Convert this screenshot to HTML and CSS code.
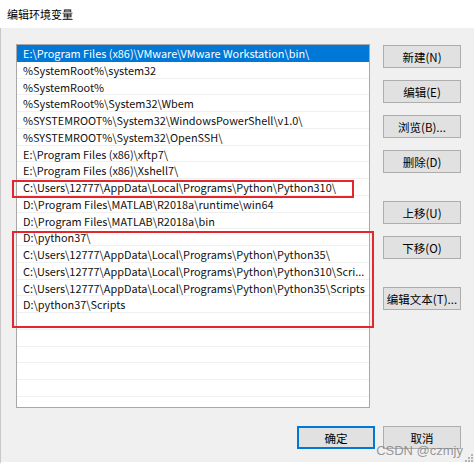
FILE: index.html
```html
<!DOCTYPE html>
<html lang="zh-CN">
<head>
<meta charset="utf-8">
<link rel="stylesheet" href="styles.css">
</head>
<body>
  <div class="dialog">
    <div class="titlebar">编辑环境变量</div>
    <div class="frame">
      <div class="content">
        <div class="list-wrap">
          <ul class="path-list">
            <li class="selected">E:\Program Files (x86)\VMware\VMware Workstation\bin\</li>
            <li>%SystemRoot%\system32</li>
            <li>%SystemRoot%</li>
            <li>%SystemRoot%\System32\Wbem</li>
            <li>%SYSTEMROOT%\System32\WindowsPowerShell\v1.0\</li>
            <li>%SYSTEMROOT%\System32\OpenSSH\</li>
            <li>E:\Program Files (x86)\xftp7\</li>
            <li>E:\Program Files (x86)\Xshell7\</li>
            <li>C:\Users\12777\AppData\Local\Programs\Python\Python310\</li>
            <li>D:\Program Files\MATLAB\R2018a\runtime\win64</li>
            <li>D:\Program Files\MATLAB\R2018a\bin</li>
            <li>D:\python37\</li>
            <li>C:\Users\12777\AppData\Local\Programs\Python\Python35\</li>
            <li>C:\Users\12777\AppData\Local\Programs\Python\Python310\Scri...</li>
            <li>C:\Users\12777\AppData\Local\Programs\Python\Python35\Scripts</li>
            <li>D:\python37\Scripts</li>
            <li></li>
            <li></li>
            <li></li>
            <li></li>
            <li></li>
            <li></li>
          </ul>
          <!-- red outlines drawn over the list -->
          <div class="mark mark-single"></div>
          <div class="mark mark-group"></div>
        </div>
        <div class="side-buttons">
          <button class="btn">新建(N)</button>
          <button class="btn">编辑(E)</button>
          <button class="btn">浏览(B)...</button>
          <button class="btn">删除(D)</button>
          <button class="btn spaced">上移(U)</button>
          <button class="btn">下移(O)</button>
          <button class="btn spaced">编辑文本(T)...</button>
        </div>
      </div>
      <div class="footer">
        <button class="btn default">确定</button>
        <button class="btn">取消</button>
      </div>
    </div>
    <span class="watermark">CSDN @czmjy</span>
    <svg class="grip" viewBox="0 0 8 8" width="8" height="8">
      <rect x="6" y="0" width="2" height="2"/>
      <rect x="3" y="3" width="2" height="2"/>
      <rect x="6" y="3" width="2" height="2"/>
      <rect x="0" y="6" width="2" height="2"/>
      <rect x="3" y="6" width="2" height="2"/>
      <rect x="6" y="6" width="2" height="2"/>
    </svg>
  </div>
</body>
</html>
```
FILE: styles.css
```css
body {
  margin: 0;
  background: #f0f0f0;
}

.dialog {
  position: relative;
  width: 474px;
  height: 464px;
  display: flex;
  flex-direction: column;
  background: #f0f0f0;
  font-family: "Noto Sans CJK SC", sans-serif;
  color: #000;
  overflow: hidden;
}

.titlebar {
  height: 28px;
  line-height: 28px;
  padding-left: 7px;
  background: #fff;
  font-size: 11px;
}

.frame {
  flex: 1;
  border-left: 1px solid #c8c8c8;
  border-bottom: 2px solid #fff;
}

.content {
  display: flex;
  gap: 13px;
  padding: 16px 0 0 15px;
}

.list-wrap {
  position: relative;
  width: 354px;
  height: 364px;
}

.path-list {
  list-style: none;
  margin: 0;
  padding: 0;
  height: 100%;
  box-sizing: border-box;
  border: 1px solid #a8a8a8;
  background: #fff;
  overflow: hidden;
}

.path-list li {
  height: 16.75px;
  line-height: 16px;
  box-sizing: border-box;
  border-bottom: 1px solid #f0f0f0;
  padding-left: 6px;
  font-size: 10.9px;
  white-space: nowrap;
  color: #111;
}

.path-list li.selected {
  background: #0078d7;
  border-bottom-color: #0078d7;
  color: #fff;
}

.mark {
  position: absolute;
  box-sizing: border-box;
  border: 2px solid #e6262d;
}

.mark-single {
  left: -4px;
  top: 136px;
  width: 342px;
  height: 18px;
}

.mark-group {
  left: -4px;
  top: 187px;
  width: 362px;
  height: 97px;
}

.side-buttons {
  display: flex;
  flex-direction: column;
  gap: 12px;
  padding-top: 1px;
}

.btn {
  width: 78px;
  height: 23px;
  padding: 0;
  box-sizing: border-box;
  border: 1px solid #adadad;
  background: #e1e1e1;
  font-family: "Noto Sans CJK SC", sans-serif;
  font-size: 11.5px;
  color: #000;
}

.side-buttons .spaced {
  margin-top: 16px;
}

.btn.default {
  border-color: #0078d7;
  box-shadow: inset 0 0 0 1px #0078d7;
}

.footer {
  display: flex;
  justify-content: flex-end;
  gap: 8px;
  padding-right: 13px;
  margin-top: 18px;
}

.watermark {
  position: absolute;
  right: 11px;
  bottom: 7px;
  font-family: "Liberation Sans", Arial, sans-serif;
  font-size: 13px;
  line-height: 13px;
  color: rgba(125, 125, 125, 0.8);
}

.grip {
  position: absolute;
  right: 1px;
  bottom: 2px;
  fill: #b4b4b4;
}
```
